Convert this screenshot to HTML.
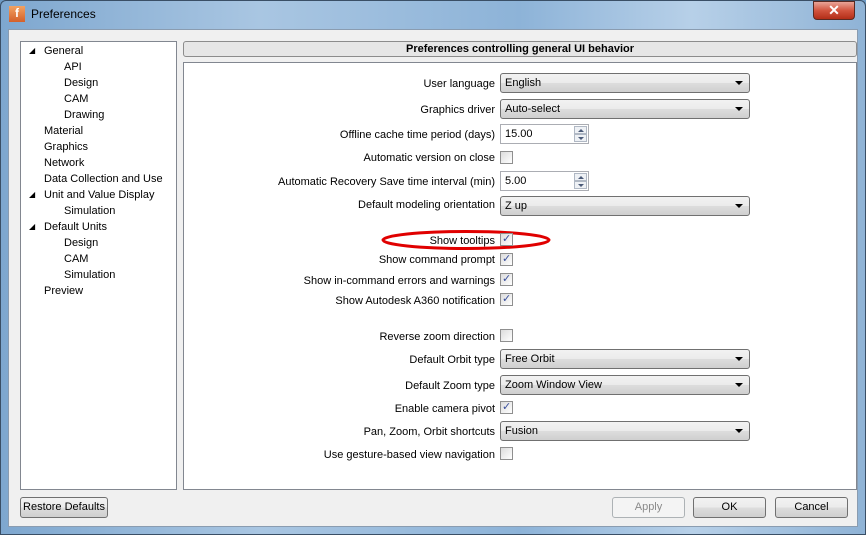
<!DOCTYPE html>
<html><head><style>
*{margin:0;padding:0;box-sizing:border-box}
body{width:866px;height:535px;overflow:hidden;font-family:"Liberation Sans",sans-serif;font-size:11px;color:#000;background:#6d9ac4;position:relative}
.frame{position:absolute;left:0;top:0;width:866px;height:535px;background:linear-gradient(90deg,#7ea7cf 0%,#a9c6e2 30%,#8db3d8 60%,#b7d0e8 80%,#8fb3d6 100%);border:1px solid #3a4f66;border-radius:6px 6px 0 0}
.title{position:absolute;left:31px;top:7px;font-family:"Liberation Sans",sans-serif;font-size:12px;color:#000}
.icon{position:absolute;left:9px;top:6px;width:16px;height:16px;background:linear-gradient(#f2a262,#d4602a);color:#fff;font-weight:bold;font-size:12px;text-align:center;line-height:15px}
.close{position:absolute;left:813px;top:1px;width:42px;height:19px;border:1px solid #5a2a22;border-radius:0 0 4px 4px;background:linear-gradient(#e9a598,#d2543e 50%,#b32e18);color:#fff;text-align:center;font-weight:bold;font-size:14px;line-height:17px}
.client{position:absolute;left:8px;top:29px;width:850px;height:498px;background:#f0f0f0;border:1px solid #8a9cb0}
.a{position:absolute}
.tree{left:20px;top:41px;width:157px;height:449px;background:#fff;border:1px solid #828790}
.tree div{position:absolute;white-space:nowrap;line-height:16px}
.hdr{left:183px;top:41px;width:674px;height:16px;background:#e6e6e6;border:1px solid #8c8c8c;border-radius:3px;text-align:center;font-weight:bold;line-height:14px}
.main{left:183px;top:62px;width:674px;height:428px;background:#fff;border:1px solid #828790}
.lbl{position:absolute;right:371px;white-space:nowrap;text-align:right;line-height:14px;margin-top:1px}
.combo{position:absolute;left:500px;width:250px;height:20px;border:1px solid #707070;border-radius:3px;background:linear-gradient(#f2f2f2,#ebebeb 50%,#dddddd 51%,#cfcfcf);padding-left:4px;line-height:19px}
.combo:after{content:"";position:absolute;right:6px;top:7px;border-left:4px solid transparent;border-right:4px solid transparent;border-top:4px solid #000}
.spin{position:absolute;left:500px;width:89px;height:20px;border:1px solid #abadb3;background:#fff;padding-left:4px;line-height:19px}
.spin i{position:absolute;right:1px;width:13px;height:8px;border:1px solid #b0b8c4;background:#eef1f5}
.spin i:after{content:"";position:absolute;left:3px;top:2px;border-left:3px solid transparent;border-right:3px solid transparent}
.spin i.u{top:1px}.spin i.u:after{border-bottom:3px solid #4a5a78}
.spin i.d{top:9px}.spin i.d:after{border-top:3px solid #4a5a78}
.cb{position:absolute;left:500px;width:13px;height:13px;border:1px solid #8f8f8f;background:linear-gradient(135deg,#dcdcdc,#fff)}
.cb.on:after{content:"✓";position:absolute;left:1px;top:-2px;font-size:11px;color:#3a4f9c}
.btn{position:absolute;height:21px;border:1px solid #707070;border-radius:3px;background:linear-gradient(#f2f2f2,#ebebeb 50%,#dddddd 51%,#cfcfcf);text-align:center;line-height:19px}
</style></head><body>
<div class="frame"></div>
<div class="icon">f</div>
<div class="title">Preferences</div>
<div class="close">✕</div>
<div class="client"></div>
<div class="a tree">
<div style="left:8px;top:1px;font-size:8px">◢</div>
<div style="left:23px;top:1px">General</div>
<div style="left:43px;top:17px">API</div>
<div style="left:43px;top:33px">Design</div>
<div style="left:43px;top:49px">CAM</div>
<div style="left:43px;top:65px">Drawing</div>
<div style="left:23px;top:81px">Material</div>
<div style="left:23px;top:97px">Graphics</div>
<div style="left:23px;top:113px">Network</div>
<div style="left:23px;top:129px">Data Collection and Use</div>
<div style="left:8px;top:145px;font-size:8px">◢</div>
<div style="left:23px;top:145px">Unit and Value Display</div>
<div style="left:43px;top:161px">Simulation</div>
<div style="left:8px;top:177px;font-size:8px">◢</div>
<div style="left:23px;top:177px">Default Units</div>
<div style="left:43px;top:193px">Design</div>
<div style="left:43px;top:209px">CAM</div>
<div style="left:43px;top:225px">Simulation</div>
<div style="left:23px;top:241px">Preview</div>
</div>
<div class="a hdr">Preferences controlling general UI behavior</div>
<div class="a main"></div>

<div class="lbl" style="top:76px">User language</div><div class="combo" style="top:73px">English</div>
<div class="lbl" style="top:102px">Graphics driver</div><div class="combo" style="top:99px">Auto-select</div>
<div class="lbl" style="top:127px">Offline cache time period (days)</div><div class="spin" style="top:124px">15.00<i class="u"></i><i class="d"></i></div>
<div class="lbl" style="top:150px">Automatic version on close</div><div class="cb" style="top:151px"></div>
<div class="lbl" style="top:174px">Automatic Recovery Save time interval (min)</div><div class="spin" style="top:171px">5.00<i class="u"></i><i class="d"></i></div>
<div class="lbl" style="top:197px">Default modeling orientation</div><div class="combo" style="top:196px">Z up</div>

<svg class="a" style="left:380px;top:229px" width="172" height="22"><ellipse cx="86" cy="11" rx="83" ry="8.5" fill="none" stroke="#e00000" stroke-width="3"/></svg>
<div class="lbl" style="top:233px">Show tooltips</div><div class="cb on" style="top:233px"></div>
<div class="lbl" style="top:252px">Show command prompt</div><div class="cb on" style="top:253px"></div>
<div class="lbl" style="top:273px">Show in-command errors and warnings</div><div class="cb on" style="top:273px"></div>
<div class="lbl" style="top:293px">Show Autodesk A360 notification</div><div class="cb on" style="top:293px"></div>

<div class="lbl" style="top:329px">Reverse zoom direction</div><div class="cb" style="top:329px"></div>
<div class="lbl" style="top:352px">Default Orbit type</div><div class="combo" style="top:349px">Free Orbit</div>
<div class="lbl" style="top:378px">Default Zoom type</div><div class="combo" style="top:375px">Zoom Window View</div>
<div class="lbl" style="top:401px">Enable camera pivot</div><div class="cb on" style="top:401px"></div>
<div class="lbl" style="top:424px">Pan, Zoom, Orbit shortcuts</div><div class="combo" style="top:421px">Fusion</div>
<div class="lbl" style="top:447px">Use gesture-based view navigation</div><div class="cb" style="top:447px"></div>

<div class="btn" style="left:20px;top:497px;width:88px">Restore Defaults</div>
<div class="btn" style="left:612px;top:497px;width:73px;color:#8a8a8a;border-color:#adb2b5;background:#f4f4f4">Apply</div>
<div class="btn" style="left:693px;top:497px;width:73px">OK</div>
<div class="btn" style="left:775px;top:497px;width:73px">Cancel</div>
</body></html>
